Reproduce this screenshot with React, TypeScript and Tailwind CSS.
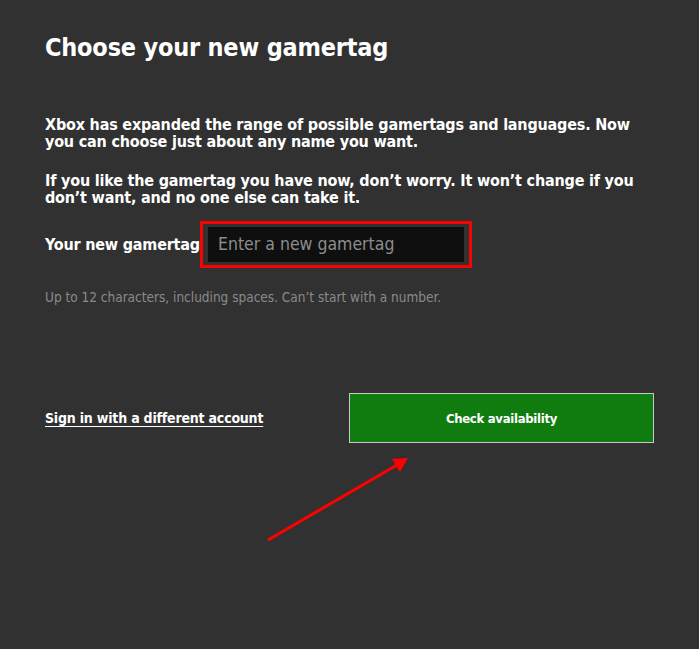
import React from "react";

export default function App() {
  const font = { fontFamily: '"DejaVu Sans Condensed", "DejaVu Sans", sans-serif' };
  return (
    <div className="relative w-full h-[649px] bg-[#313131] overflow-hidden text-white" style={font}>
      <div className="pl-[45px] pt-[33px] pr-[40px]">
        <h1 className="text-[25px] leading-[30px] font-bold tracking-[-0.2px]">Choose your new gamertag</h1>
        <p className="mt-[53px] text-[16px] leading-[17px] font-bold tracking-[-0.2px] w-[600px]">
          Xbox has expanded the range of possible gamertags and languages. Now you can choose just about any name you want.
        </p>
        <p className="mt-[22px] text-[16px] leading-[17px] font-bold tracking-[-0.2px] w-[600px]">
          If you like the gamertag you have now, don’t worry. It won’t change if you don’t want, and no one else can take it.
        </p>
        <div className="mt-[15px] flex items-center">
          <span className="text-[16px] font-bold tracking-[-0.2px] w-[155px] whitespace-nowrap">Your new gamertag:</span>
          <div className="relative z-10 border-[3px] border-[#ff0000] bg-[#313131] w-[272px] h-[47px] px-[5px] py-[3px]">
            <div className="bg-[#0f0f0f] h-full flex items-center pl-[10px] text-[17.5px] text-[#8c8c8c]">
              Enter a new gamertag
            </div>
          </div>
        </div>
        <p className="mt-[19px] text-[13.5px] text-[#8a8a8a]">
          Up to 12 characters, including spaces. Can’t start with a number.
        </p>
        <div className="mt-[86px] flex items-center">
          <a className="text-[14px] font-bold tracking-[-0.2px] underline underline-offset-[3px] w-[304px]">Sign in with a different account</a>
          <button className="w-[305px] h-[50px] bg-[#107c10] border border-[#c8c8c8] text-[13px] tracking-[-0.3px] font-bold text-white">
            Check availability
          </button>
        </div>
      </div>
      <svg className="absolute left-0 top-0" width="699" height="649">
        <line x1="268" y1="540" x2="397" y2="465" stroke="#ff0000" strokeWidth="3" />
        <polygon points="408,458 392,459 400,472" fill="#ff0000" />
      </svg>
    </div>
  );
}
